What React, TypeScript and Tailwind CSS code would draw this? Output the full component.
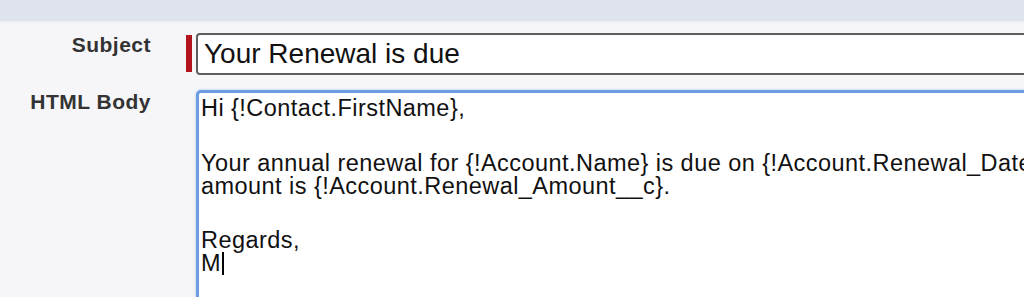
import React from 'react';

const bodyLines = {
  greeting: 'Hi {!Contact.FirstName},',
  para: [
    'Your annual renewal for {!Account.Name} is due on {!Account.Renewal_Date__c}.',
    'amount is {!Account.Renewal_Amount__c}.',
  ],
  signoff: 'Regards,',
};

export default function App() {
  return (
    <div className="w-[1024px] h-[297px] overflow-hidden bg-[#f6f6f8]" style={{ fontFamily: '"Liberation Sans", Arial, sans-serif' }}>
      <div className="h-[21px] bg-[#dfe3ed]" />
      <div className="h-[2px] bg-[#eef0f5]" />

      {/* Subject row */}
      <div className="flex items-start pt-[10px]">
        <div className="w-[151px] shrink-0 text-right text-[21px] leading-[24px] font-bold tracking-[0.5px] text-[#333333]">
          Subject
        </div>
        <div className="ml-[35px] mt-[2px] w-[6px] h-[37px] shrink-0 bg-[#b2141c]" />
        <div className="ml-[4px] w-[1000px] shrink-0 h-[42px] bg-white border-2 border-[#5e5e5e] rounded-l-[4px] pl-[6px] text-[28px] leading-[38px] text-[#111111] whitespace-nowrap">
          Your Renewal is due
        </div>
      </div>

      {/* HTML Body row */}
      <div className="flex items-start mt-[15px]">
        <div className="w-[151px] shrink-0 text-right text-[21px] leading-[24px] font-bold tracking-[0.5px] text-[#333333]">
          HTML Body
        </div>
        <div className="ml-[45px] w-[1000px] shrink-0 h-[240px] bg-white border-[3px] border-[#6b9be0] rounded-tl-[5px] shadow-[0_0_3px_#a9c6f0] pl-[2px] pt-[4px] text-[23.5px] leading-[23px] tracking-[0.45px] text-[#111111] whitespace-nowrap overflow-hidden">
          <div>{bodyLines.greeting}</div>
          <div className="mt-[32px]">
            {bodyLines.para.map((line, i) => (
              <div key={i}>{line}</div>
            ))}
          </div>
          <div className="mt-[31px]">{bodyLines.signoff}</div>
          <div className="flex items-center">
            M<span className="inline-block w-[1.5px] h-[23px] bg-black ml-[1px]" />
          </div>
        </div>
      </div>
    </div>
  );
}
